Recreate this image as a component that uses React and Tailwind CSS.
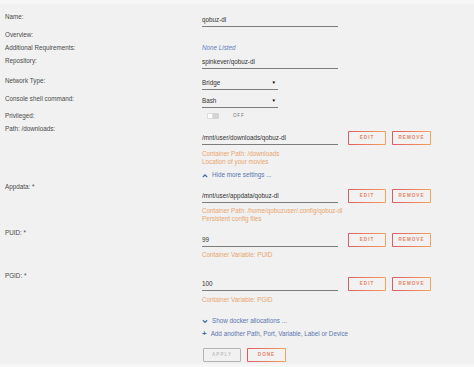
import React from 'react';

const font = { fontFamily: '"Liberation Sans", Arial, sans-serif' };

function Label({ children }) {
  return <div className="w-[202px] shrink-0 pl-[5px] leading-[8px] text-[#4a4a4a]">{children}</div>;
}

function Input({ value, width = 'w-[136px]' }) {
  return (
    <div className={`${width} h-[11px] leading-[8px] border-b border-[#7d7d7d] text-[#333] text-[6.3px]`}>
      {value}
    </div>
  );
}

function Select({ value }) {
  return (
    <div className="w-[76px] h-[11px] leading-[8px] border-b border-[#7d7d7d] text-[#333] flex justify-between pr-[2px]">
      <span>{value}</span>
      <span className="text-[4.5px] text-black">▼</span>
    </div>
  );
}

function GradButton({ children, w = 'w-[38px]' }) {
  return (
    <div className={`${w} h-[14px] rounded-[1px] p-[1px] bg-gradient-to-r from-[#dd5a62] to-[#f4a25c]`}>
      <div className="h-full w-full bg-[#f2f2f2] flex items-center justify-center text-[4.6px] font-bold tracking-[1px] text-[#e58363]">
        {children}
      </div>
    </div>
  );
}

function Help({ children }) {
  return <div className="leading-[8px] text-[#e9a56d]">{children}</div>;
}

function PathRow({ label, value, labelMt, valueMt, helpMt, help }) {
  return (
    <div className="flex" style={{ marginTop: labelMt }}>
      <Label>{label}</Label>
      <div style={{ marginTop: valueMt }}>
        <div className="flex items-start">
          <div className="mt-[3px]">
            <Input value={value} />
          </div>
          <div className="ml-[10px] flex gap-[6px]">
            <GradButton>EDIT</GradButton>
            <GradButton w="w-[39px]">REMOVE</GradButton>
          </div>
        </div>
        <div style={{ marginTop: helpMt }}>
          {help.map((h) => (
            <Help key={h}>{h}</Help>
          ))}
        </div>
      </div>
    </div>
  );
}

function Chevron({ up }) {
  return (
    <svg width="6" height="5" viewBox="0 0 10 8" className="mr-[4px]">
      <path
        d={up ? 'M1.5 6.5 L5 3 L8.5 6.5' : 'M1.5 2 L5 5.5 L8.5 2'}
        fill="none"
        stroke="#4b6aa8"
        strokeWidth="2.2"
      />
    </svg>
  );
}

export default function App() {
  return (
    <div className="w-[474px] h-[367px] bg-[#f6f6f6] pt-[4px] text-[6.3px]" style={font}>
      <div className="h-[360px] bg-[#f1f1f1] pt-[9px]">
        {/* Name */}
        <div className="flex h-[18px]">
          <Label>Name:</Label>
          <div className="mt-[3px]">
            <Input value="qobuz-dl" />
          </div>
        </div>
        <div className="flex h-[13px]">
          <Label>Overview:</Label>
        </div>
        <div className="flex h-[13px]">
          <Label>Additional Requirements:</Label>
          <div className="leading-[8px] italic text-[#6581c0]">None Listed</div>
        </div>
        <div className="flex h-[20px]">
          <Label>Repository:</Label>
          <div className="mt-[1px]">
            <Input value="spinkever/qobuz-dl" />
          </div>
        </div>
        <div className="flex h-[18px]">
          <Label>Network Type:</Label>
          <div className="mt-[2px]">
            <Select value="Bridge" />
          </div>
        </div>
        <div className="flex h-[17px]">
          <Label>Console shell command:</Label>
          <div className="mt-[2px]">
            <Select value="Bash" />
          </div>
        </div>
        <div className="flex h-[13px]">
          <Label>Privileged:</Label>
          <div className="flex items-center h-[8px] ml-[5px]">
            <div className="w-[12px] h-[6px] rounded-[1px] bg-[#d4d4d4] relative">
              <div className="absolute left-0 top-0 w-[6px] h-[6px] rounded-[1px] bg-white border border-[#dcdcdc]" />
            </div>
            <span className="ml-[14px] text-[4.6px] tracking-[0.8px] text-[#777]">OFF</span>
          </div>
        </div>

        <PathRow
          label="Path: /downloads:"
          value="/mnt/user/downloads/qobuz-dl"
          labelMt={0}
          valueMt={6}
          helpMt={5}
          help={['Container Path: /downloads', 'Location of your movies']}
        />

        <div className="flex mt-[5px] h-[8px]">
          <Label />
          <div className="flex items-center leading-[8px] text-[#5a76b0]">
            <Chevron up />
            Hide more settings ...
          </div>
        </div>

        <PathRow
          label="Appdata: *"
          value="/mnt/user/appdata/qobuz-dl"
          labelMt={4}
          valueMt={6}
          helpMt={4}
          help={['Container Path: /home/qobuzuser/.config/qobuz-dl', 'Persistent config files']}
        />
        <PathRow
          label="PUID: *"
          value="99"
          labelMt={6}
          valueMt={4}
          helpMt={4}
          help={['Container Variable: PUID']}
        />
        <PathRow
          label="PGID: *"
          value="100"
          labelMt={13}
          valueMt={5}
          helpMt={5}
          help={['Container Variable: PGID']}
        />

        <div className="flex mt-[13px] h-[8px]">
          <Label />
          <div className="flex items-center leading-[8px] text-[#5a76b0]">
            <Chevron />
            Show docker allocations ...
          </div>
        </div>
        <div className="flex mt-[5px] h-[8px]">
          <Label />
          <div className="flex items-center leading-[8px] text-[#5a76b0]">
            <span className="mr-[4px] text-[8px] font-bold leading-[8px] text-[#4b6aa8]">+</span>
            Add another Path, Port, Variable, Label or Device
          </div>
        </div>
        <div className="flex mt-[10px]">
          <div className="w-[203px] shrink-0" />
          <div className="flex gap-[6px]">
            <div className="w-[38px] h-[14px] border border-[#b4b4b4] rounded-[1px] flex items-center justify-center text-[4.6px] font-bold tracking-[1px] text-[#c2c2c2]">
              APPLY
            </div>
            <GradButton w="w-[39px]">DONE</GradButton>
          </div>
        </div>
      </div>
    </div>
  );
}
